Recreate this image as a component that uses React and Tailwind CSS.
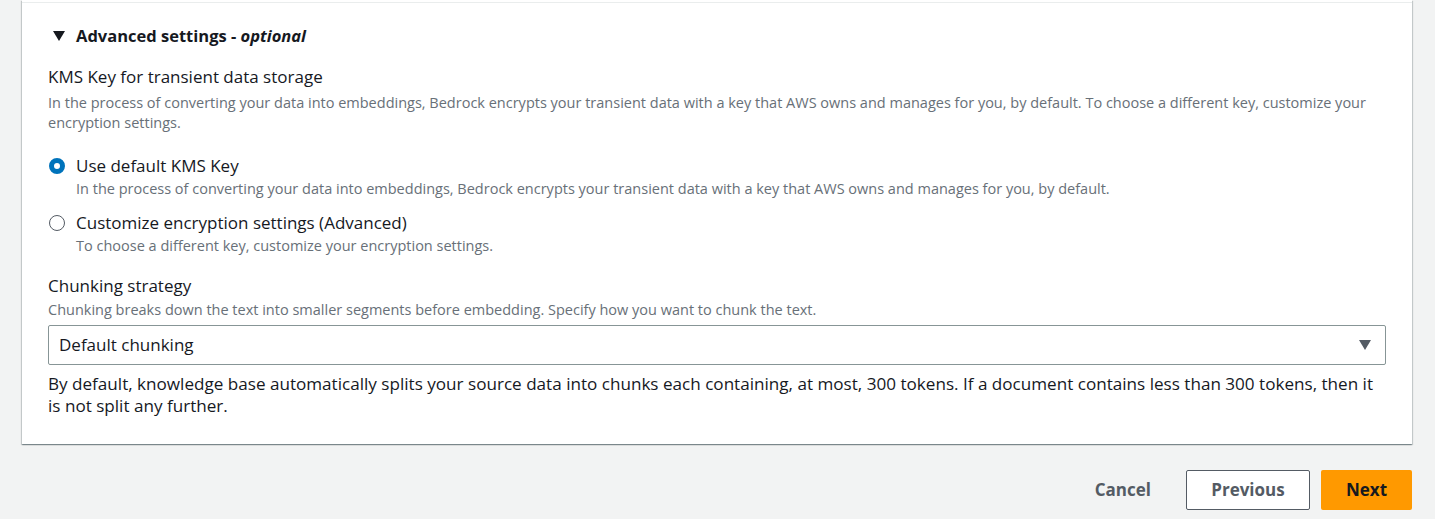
import React from "react";

function Radio({ checked, label, description }) {
  return (
    <div className="flex">
      <div className="flex h-[20px] w-[28px] items-center">
        {checked ? (
          <span className="ml-[1px] block h-[16px] w-[16px] rounded-full border-[5px] border-[#0073bb] bg-white" />
        ) : (
          <span className="ml-[1px] block h-[16px] w-[16px] rounded-full border-[1.5px] border-[#545b64] bg-white" />
        )}
      </div>
      <div>
        <div className="text-[17px] leading-[20px]">{label}</div>
        <div className="mt-[3px] text-[14.5px] leading-[20px] text-[#687078]">{description}</div>
      </div>
    </div>
  );
}

export default function App() {
  return (
    <div className="min-h-screen bg-[#f2f3f3] font-['Open_Sans',sans-serif] text-[#16191f]">
      <div className="ml-[22px] w-[1390px] bg-white shadow-[0_1px_1px_0_rgba(0,28,36,0.3),1px_1px_1px_0_rgba(0,28,36,0.15),-1px_1px_1px_0_rgba(0,28,36,0.15)]">
        <div className="h-[2px]" />
        <div className="border-t border-[#eaeded] px-[26px] pt-[21px] pb-[27px]">
          <div className="flex h-[24px] items-center">
            <svg width="12" height="10" viewBox="0 0 12 10" className="ml-[5px] mr-[11px]">
              <path d="M0 0 H12 L6 10 Z" fill="#16191f" />
            </svg>
            <span className="text-[16.5px] font-bold">
              Advanced settings - <i>optional</i>
            </span>
          </div>

          <div className="mt-[19px] text-[17px] leading-[20px]">KMS Key for transient data storage</div>
          <div className="mt-[6px] text-[14.5px] leading-[20px] text-[#687078]">
            In the process of converting your data into embeddings, Bedrock encrypts your transient data with a key that AWS owns and manages for you, by default. To choose a different key, customize your encryption settings.
          </div>

          <div className="mt-[23px]">
            <Radio
              checked
              label="Use default KMS Key"
              description="In the process of converting your data into embeddings, Bedrock encrypts your transient data with a key that AWS owns and manages for you, by default."
            />
          </div>
          <div className="mt-[14px]">
            <Radio
              label="Customize encryption settings (Advanced)"
              description="To choose a different key, customize your encryption settings."
            />
          </div>

          <div className="mt-[20px] text-[17px] leading-[20px]">Chunking strategy</div>
          <div className="mt-[4px] text-[14.5px] leading-[20px] text-[#687078]">
            Chunking breaks down the text into smaller segments before embedding. Specify how you want to chunk the text.
          </div>
          <div className="mt-[5px] flex h-[40px] items-center justify-between rounded-[2px] border border-[#879596] pl-[10px] pr-[14px]">
            <span className="text-[17px]">Default chunking</span>
            <svg width="12" height="10" viewBox="0 0 12 10">
              <path d="M0 0 H12 L6 10 Z" fill="#545b64" />
            </svg>
          </div>
          <div className="mt-[8px] text-[17.1px] leading-[22px]">
            By default, knowledge base automatically splits your source data into chunks each containing, at most, 300 tokens. If a document contains less than 300 tokens, then it is not split any further.
          </div>
        </div>
      </div>

      <div className="mt-[26px] flex w-[1412px] justify-end">
        <button className="h-[40px] px-[20px] text-[17px] font-bold text-[#545b64]">Cancel</button>
        <button className="ml-[15px] h-[40px] w-[124px] rounded-[2px] border border-[#545b64] bg-white text-[17px] font-bold text-[#545b64]">
          Previous
        </button>
        <button className="ml-[11px] h-[40px] w-[91px] rounded-[2px] bg-[#ff9900] text-[17px] font-bold text-[#16191f]">
          Next
        </button>
      </div>
    </div>
  );
}
